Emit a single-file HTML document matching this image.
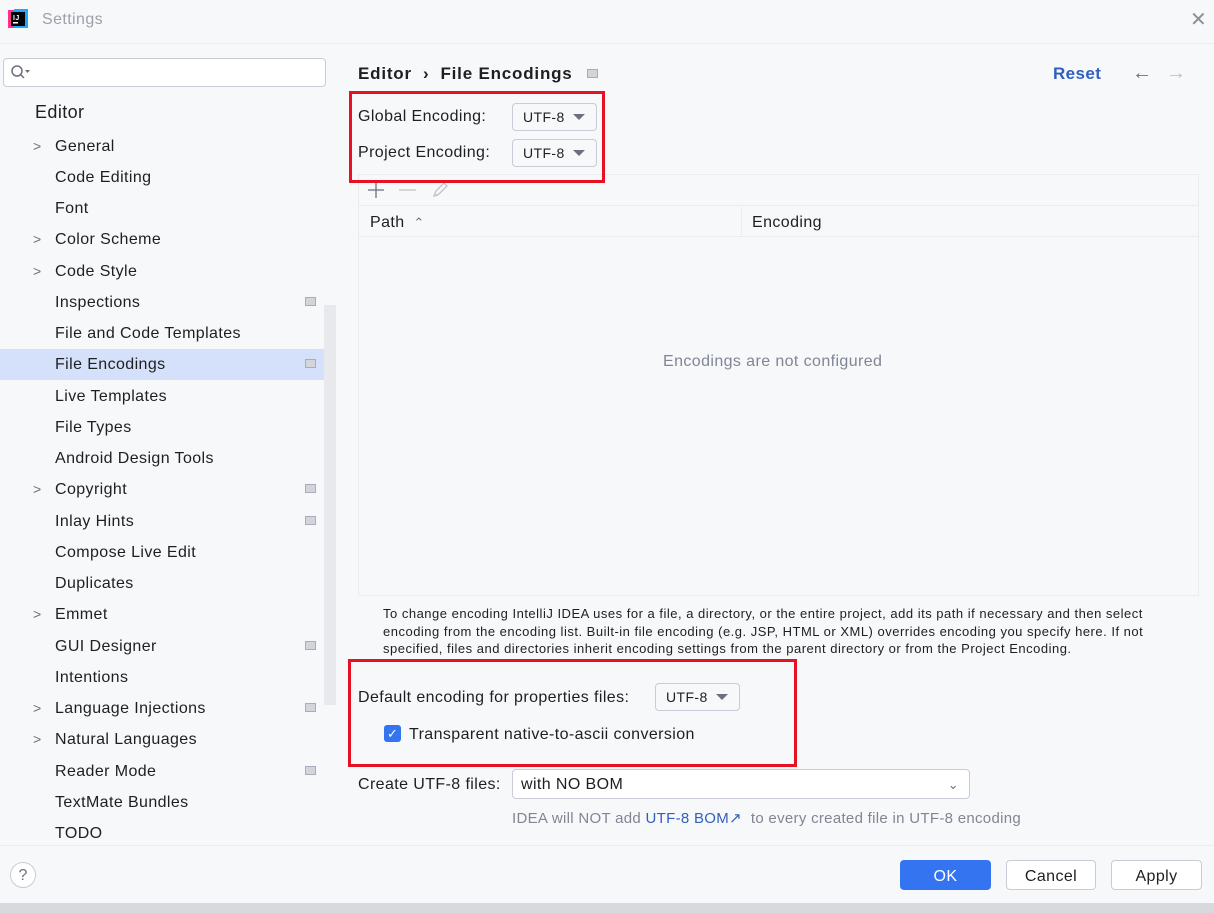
<html><head><style>
body{margin:0;width:1214px;height:913px;background:#f7f8fa;font-family:"Liberation Sans",sans-serif;color:#1e1f22;position:relative;overflow:hidden;font-size:16px;letter-spacing:0.4px}
.a{position:absolute;white-space:nowrap}
.it{position:absolute;left:55px;font-size:16px}
.chev{position:absolute;left:33px;color:#6c707e;font-size:14px}
.pin{position:absolute;left:305px;width:11px;height:9px;border:1px solid #a8adbd;background:#d3d5db;box-sizing:border-box}
.dd{position:absolute;height:28px;border:1px solid #c9ccd6;border-radius:4px;background:#f7f8fa;box-sizing:border-box;font-size:14px;line-height:26px;padding-left:10px}
.dd:after{content:"";position:absolute;right:11px;top:10px;border-left:6px solid transparent;border-right:6px solid transparent;border-top:6px solid #6c707e}
.btn{position:absolute;top:860px;height:30px;border:1px solid #c9ccd6;border-radius:4px;background:#fff;box-sizing:border-box;text-align:center;line-height:31px;font-size:16px}
.red{position:absolute;border:3px solid #e81123;box-sizing:border-box}
</style></head><body>
<svg class="a" style="left:8px;top:9px" width="20" height="20"><rect x="0" y="1" width="20" height="18" fill="#ff318c"/><rect x="6" y="0" width="14" height="19" fill="#1ea8ff"/><rect x="3" y="3" width="14" height="14" fill="#000"/><text x="5" y="11" font-size="7" fill="#fff" font-family="Liberation Sans" font-weight="bold">IJ</text><rect x="5" y="13" width="5" height="1.5" fill="#fff"/></svg>
<div class="a" style="left:42px;top:11px;font-size:16px;color:#9da0a8">Settings</div>
<div class="a" style="left:1190px;top:7px;font-size:20px;color:#8c8f97">✕</div>
<div class="a" style="left:0;top:43px;width:1214px;height:1px;background:#ebecf0"></div>
<div class="a" style="left:3px;top:58px;width:323px;height:29px;background:#fff;border:1px solid #c9ccd6;border-radius:4px;box-sizing:border-box"></div>
<svg class="a" style="left:10px;top:64px" width="22" height="18"><circle cx="7" cy="7" r="5" fill="none" stroke="#6c707e" stroke-width="1.5"/><line x1="10.5" y1="10.5" x2="14" y2="14" stroke="#6c707e" stroke-width="1.5"/><path d="M15 6h5l-2.5 3z" fill="#6c707e"/></svg>
<div class="a" style="left:35px;top:102px;font-size:18px">Editor</div>
<div class="a" style="left:0;top:349px;width:336px;height:31px;background:#d5e1fa"></div>
<div class="a" style="left:324px;top:305px;width:12px;height:400px;background:#e8e9ec"></div>
<div class="chev" style="top:138px">&gt;</div><div class="it" style="top:138px">General</div>
<div class="it" style="top:169px">Code Editing</div>
<div class="it" style="top:200px">Font</div>
<div class="chev" style="top:231px">&gt;</div><div class="it" style="top:231px">Color Scheme</div>
<div class="chev" style="top:263px">&gt;</div><div class="it" style="top:263px">Code Style</div>
<div class="it" style="top:294px">Inspections</div><div class="pin" style="top:297px"></div>
<div class="it" style="top:325px">File and Code Templates</div>
<div class="it" style="top:356px">File Encodings</div><div class="pin" style="top:359px"></div>
<div class="it" style="top:388px">Live Templates</div>
<div class="it" style="top:419px">File Types</div>
<div class="it" style="top:450px">Android Design Tools</div>
<div class="chev" style="top:481px">&gt;</div><div class="it" style="top:481px">Copyright</div><div class="pin" style="top:484px"></div>
<div class="it" style="top:513px">Inlay Hints</div><div class="pin" style="top:516px"></div>
<div class="it" style="top:544px">Compose Live Edit</div>
<div class="it" style="top:575px">Duplicates</div>
<div class="chev" style="top:606px">&gt;</div><div class="it" style="top:606px">Emmet</div>
<div class="it" style="top:638px">GUI Designer</div><div class="pin" style="top:641px"></div>
<div class="it" style="top:669px">Intentions</div>
<div class="chev" style="top:700px">&gt;</div><div class="it" style="top:700px">Language Injections</div><div class="pin" style="top:703px"></div>
<div class="chev" style="top:731px">&gt;</div><div class="it" style="top:731px">Natural Languages</div>
<div class="it" style="top:763px">Reader Mode</div><div class="pin" style="top:766px"></div>
<div class="it" style="top:794px">TextMate Bundles</div>
<div class="it" style="top:825px">TODO</div>

<div class="a" style="left:358px;top:64px;font-size:17px;font-weight:bold;letter-spacing:0.8px">Editor &nbsp;› &nbsp;File Encodings</div>
<div class="pin" style="left:587px;top:69px"></div>
<div class="a" style="left:1053px;top:64px;font-size:17px;color:#315fbd;font-weight:bold">Reset</div>
<div class="a" style="left:1132px;top:62px;font-size:20px;color:#6c707e">←</div>
<div class="a" style="left:1166px;top:62px;font-size:20px;color:#c0c2c8">→</div>

<div class="a" style="left:358px;top:108px">Global Encoding:</div>
<div class="dd" style="left:512px;top:103px;width:85px">UTF-8</div>
<div class="a" style="left:358px;top:144px">Project Encoding:</div>
<div class="dd" style="left:512px;top:139px;width:85px">UTF-8</div>

<div class="a" style="left:358px;top:174px;width:841px;height:422px;border:1px solid #ebecf0;box-sizing:border-box"></div>
<svg class="a" style="left:367px;top:181px" width="90" height="18"><path d="M9 1v16M1 9h16" stroke="#6c707e" stroke-width="1.3"/><path d="M32 9h17" stroke="#c0c2c8" stroke-width="1.3"/><path d="M67 15l2-5 8-8 3 3-8 8zM67 15l4-1" fill="none" stroke="#c0c2c8" stroke-width="1.3"/></svg>
<div class="red" style="left:349px;top:91px;width:256px;height:92px"></div>
<div class="a" style="left:359px;top:205px;width:839px;height:1px;background:#ebecf0"></div>
<div class="a" style="left:359px;top:236px;width:839px;height:1px;background:#ebecf0"></div>
<div class="a" style="left:741px;top:207px;width:1px;height:28px;background:#ebecf0"></div>
<div class="a" style="left:370px;top:214px">Path <span style="color:#6c707e;font-size:13px">&nbsp;⌃</span></div>
<div class="a" style="left:752px;top:214px">Encoding</div>
<div class="a" style="left:663px;top:353px;color:#818594">Encodings are not configured</div>
<div class="a" style="left:383px;top:605px;font-size:13px;line-height:17.5px;white-space:normal;width:797px;letter-spacing:0.5px">To change encoding IntelliJ IDEA uses for a file, a directory, or the entire project, add its path if necessary and then select encoding from the encoding list. Built-in file encoding (e.g. JSP, HTML or XML) overrides encoding you specify here. If not specified, files and directories inherit encoding settings from the parent directory or from the Project Encoding.</div>

<div class="a" style="left:358px;top:689px">Default encoding for properties files:</div>
<div class="dd" style="left:655px;top:683px;width:85px">UTF-8</div>
<div class="a" style="left:384px;top:725px;width:17px;height:17px;background:#3574f0;border-radius:3px;color:#fff;font-size:13px;text-align:center;line-height:17px;letter-spacing:0">✓</div>
<div class="a" style="left:409px;top:726px">Transparent native-to-ascii conversion</div>
<div class="red" style="left:348px;top:659px;width:449px;height:108px"></div>

<div class="a" style="left:358px;top:776px">Create UTF-8 files:</div>
<div class="a" style="left:512px;top:769px;width:458px;height:30px;background:#fff;border:1px solid #c9ccd6;border-radius:4px;box-sizing:border-box;padding-left:8px;line-height:29px">with NO BOM<span style="position:absolute;right:10px;color:#6c707e;font-size:13px">⌄</span></div>
<div class="a" style="left:512px;top:809px;font-size:15px;color:#818594;letter-spacing:0.3px">IDEA will NOT add <span style="color:#315fbd">UTF-8 BOM↗</span> &nbsp;to every created file in UTF-8 encoding</div>

<div class="a" style="left:0;top:845px;width:1214px;height:1px;background:#ebecf0"></div>
<div class="a" style="left:10px;top:862px;width:26px;height:26px;border:1px solid #c9ccd6;border-radius:50%;box-sizing:border-box;background:#fff;text-align:center;line-height:25px;color:#6c707e;letter-spacing:0">?</div>
<div class="btn" style="left:900px;width:91px;background:#3574f0;border-color:#3574f0;color:#fff">OK</div>
<div class="btn" style="left:1006px;width:90px">Cancel</div>
<div class="btn" style="left:1111px;width:91px">Apply</div>
<div class="a" style="left:0;top:903px;width:1214px;height:10px;background:#d8d9dc"></div>
</body></html>
